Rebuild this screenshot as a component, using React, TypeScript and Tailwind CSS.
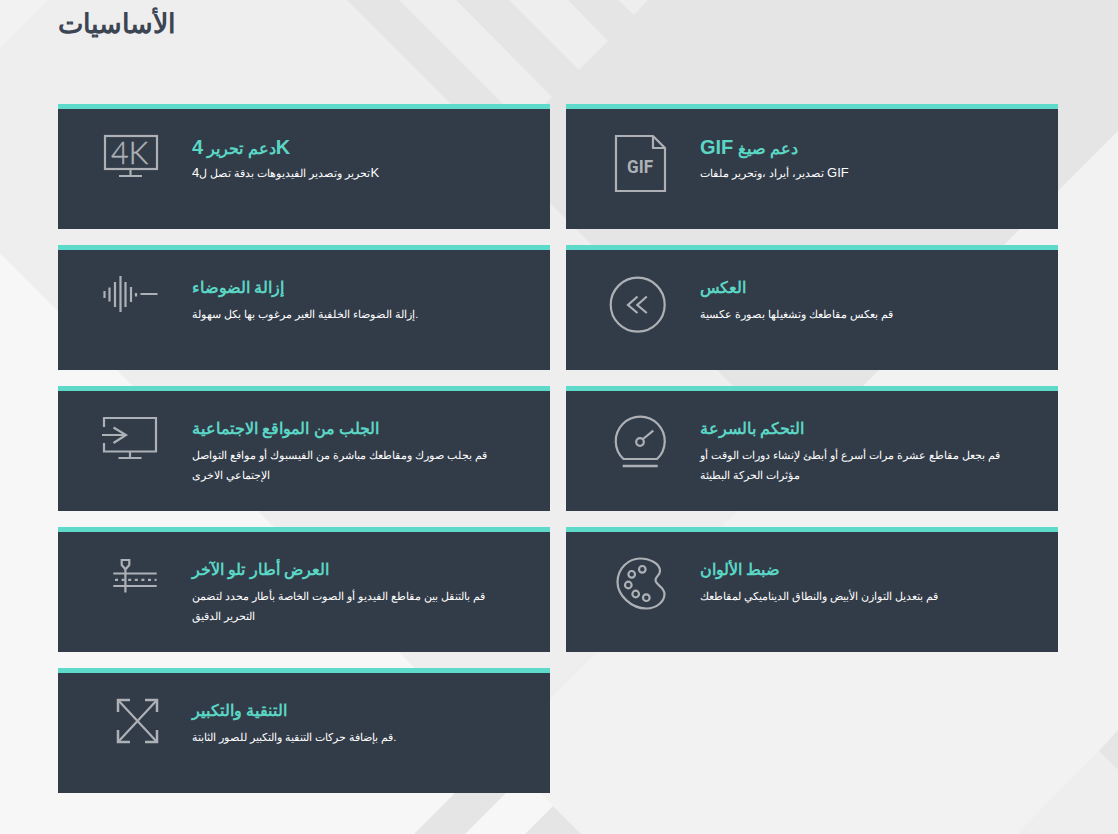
import type { ReactNode } from 'react';

const features: { icon: ReactNode; title: string; lines: string[] }[] = [
  {
    icon: <Icon4k />,
    title: 'دعم تحرير 4K',
    lines: ['تحرير وتصدير الفيديوهات بدقة تصل ل4K'],
  },
  {
    icon: <IconGif />,
    title: 'GIF دعم صيغ',
    lines: ['تصدير، أيراد ،وتحرير ملفات GIF'],
  },
  {
    icon: <IconNoise />,
    title: 'إزالة الضوضاء',
    lines: ['إزالة الضوضاء الخلفية الغير مرغوب بها بكل سهولة.'],
  },
  {
    icon: <IconReverse />,
    title: 'العكس',
    lines: ['قم بعكس مقاطعك وتشغيلها بصورة عكسية'],
  },
  {
    icon: <IconImport />,
    title: 'الجلب من المواقع الاجتماعية',
    lines: ['قم بجلب صورك ومقاطعك مباشرة من الفيسبوك أو مواقع التواصل', 'الإجتماعي الاخرى'],
  },
  {
    icon: <IconSpeed />,
    title: 'التحكم بالسرعة',
    lines: ['قم بجعل مقاطع عشرة مرات أسرع أو أبطئ لإنشاء دورات الوقت أو', 'مؤثرات الحركة البطيئة'],
  },
  {
    icon: <IconFrames />,
    title: 'العرض أطار تلو الآخر',
    lines: ['قم بالتنقل بين مقاطع الفيديو أو الصوت الخاصة بأطار محدد لتضمن', 'التحرير الدقيق'],
  },
  {
    icon: <IconPalette />,
    title: 'ضبط الألوان',
    lines: ['قم بتعديل التوازن الأبيض والنطاق الديناميكي لمقاطعك'],
  },
  {
    icon: <IconExpand />,
    title: 'التنقية والتكبير',
    lines: ['قم بإضافة حركات التنقية والتكبير للصور الثابتة.'],
  },
];

// latin runs sit larger than the arabic fallback glyphs
function Mixed({ text, latinClass }: { text: string; latinClass: string }) {
  return (
    <>
      {text.split(/(GIF|4K)/).map((part, i) =>
        part === 'GIF' || part === '4K' ? (
          <span key={i} className={latinClass}>
            {part}
          </span>
        ) : (
          part
        ),
      )}
    </>
  );
}

function IconSvg({ children }: { children: ReactNode }) {
  return (
    <svg
      width="134"
      height="70"
      viewBox="0 25 134 70"
      fill="none"
      stroke="#adb1b6"
      strokeWidth="2.2"
      className="shrink-0"
    >
      {children}
    </svg>
  );
}

function Icon4k() {
  return (
    <IconSvg>
      <rect x="47" y="32" width="52" height="33" />
      <path d="M72.5 65v7M61 72h23" />
      <text
        x="53"
        y="60"
        fontFamily="Lato, sans-serif"
        fontWeight="300"
        fontSize="31"
        fill="#adb1b6"
        stroke="#adb1b6"
        strokeWidth="0.5"
        textLength="37"
        lengthAdjust="spacingAndGlyphs"
      >
        4K
      </text>
    </IconSvg>
  );
}

function IconGif() {
  return (
    <IconSvg>
      <path d="M50 32h37l12 12v43H50z" />
      <path d="M87 32v12h12" />
      <text
        x="61"
        y="68.500"
        fontFamily="Roboto, sans-serif"
        fontWeight="700"
        fontSize="18"
        fill="#adb1b6"
        stroke="none"
        textLength="26"
        lengthAdjust="spacingAndGlyphs"
      >
        GIF
      </text>
    </IconSvg>
  );
}

function IconNoise() {
  return (
    <IconSvg>
      <path d="M46.500 46v7M51.500 42.500v14M57 37v25M62.500 31v36M67.500 37v25M73 42v15M78 48v3.500M82.500 49h17" />
    </IconSvg>
  );
}

function IconReverse() {
  return (
    <IconSvg>
      <circle cx="71.700" cy="59.700" r="27" />
      <path d="M71.500 51.500 62 60l9.500 8M80.800 51.500 71.300 60l9.500 8" />
    </IconSvg>
  );
}

function IconImport() {
  return (
    <IconSvg>
      <path d="M46 41v-9h52v33.500H46V57" />
      <path d="M44 49h24M55.500 41.500 68 49l-12.500 8M72 65.500v6M60.500 72h23" />
    </IconSvg>
  );
}

function IconSpeed() {
  return (
    <IconSvg>
      <path d="M57.500 73A24.500 24.500 0 1 1 91 73z" />
      <circle cx="74" cy="56" r="3.800" />
      <path d="M77 53 87.300 44.700" />
      <path d="M56.700 80h35" strokeWidth="2.500" />
    </IconSvg>
  );
}

function IconFrames() {
  return (
    <IconSvg>
      <path d="M63.700 33h7.600v5l-3.800 4.300-3.800-4.300zM67.400 42v23.500M55.300 46.500h43.400M55.300 59h43.400" />
      <path d="M57 52.800h41.500" strokeDasharray="3 3.600" />
    </IconSvg>
  );
}

function IconPalette() {
  return (
    <IconSvg>
      <path d="M74 31.500C83 31.500 94 36 94 44c0 5-5 5-4.500 9.500C90 58 98.500 60 98.500 67c0 8-8.500 14.500-18 14.500C65 81.500 51.500 68 51.500 55 51.500 41 63 31.500 74 31.500z" />
      <circle cx="76.300" cy="42.300" r="3.300" />
      <circle cx="65.700" cy="47.300" r="3.300" />
      <circle cx="62.300" cy="58" r="3.300" />
      <circle cx="69.700" cy="67" r="3.300" />
      <circle cx="80.300" cy="70.700" r="3.300" />
    </IconSvg>
  );
}

function IconExpand() {
  return (
    <IconSvg>
      <path d="M60 32 99 74M99 32 60 74" />
      <path d="M60 44V32h12M87 32h12v12M60 62v12h12M87 74h12V62" strokeWidth="2.500" />
    </IconSvg>
  );
}

function Background() {
  return (
    <svg className="absolute inset-0 -z-10" width="1118" height="834" viewBox="0 0 1118 834">
      <rect width="1118" height="834" fill="#f2f2f2" />
      <path d="M0 253 581 834H0z" fill="#f7f7f7" />
      <path d="M0 0H347L798 451 498 751 0 253z" fill="#eeeeee" />
      <path d="M0 0H48L0 48z" fill="#f2f2f2" />
      <path d="M347 0H1118V131L798 451z" fill="#e5e5e5" />
      <path d="M399 0H456L552 97 524 125z" fill="#eeeeee" />
      <path d="M509 0H568L608 41 579 70z" fill="#eeeeee" />
      <path d="M618 0H648L634 15z" fill="#eeeeee" />
      <path d="M414 834H465L510 789H459z" fill="#e5e5e5" />
      <path d="M553 806 525 834H581z" fill="#e5e5e5" />
      <path d="M1099 751 1017 834H1118V770z" fill="#eeeeee" />
      <path d="M1118 730 1099 751 1118 770z" fill="#e5e5e5" />
    </svg>
  );
}

export default function App() {
  return (
    <div className="relative z-0 h-[834px] overflow-hidden font-['Liberation_Sans',sans-serif]">
      <Background />
      <div className="px-[58px]">
        <h2 className="h-[104px] pt-[4px] text-[27px] leading-[40px] font-bold text-[#3c4553]">الأساسيات</h2>

        <div className="grid w-[1000px] grid-cols-2 gap-4">
          {features.map((feature) => (
            <div
              key={feature.title}
              className="flex h-[125px] border-t-[5px] border-[#5ddac9] bg-[#323b48] pt-[20px]"
            >
              {feature.icon}
              <div className="pt-[6px]">
                <h3 className="h-[24px] text-[15.700px] leading-[24px] font-bold whitespace-nowrap text-[#5ad6c4]">
                  <Mixed text={feature.title} latinClass="text-[20px]" />
                </h3>
                <div className="mt-[4px] text-[10.900px] leading-[20px] text-white">
                  {feature.lines.map((line) => (
                    <p key={line} className="h-[20px] whitespace-nowrap">
                      <Mixed text={line} latinClass="text-[13px]" />
                    </p>
                  ))}
                </div>
              </div>
            </div>
          ))}
        </div>
      </div>
    </div>
  );
}
